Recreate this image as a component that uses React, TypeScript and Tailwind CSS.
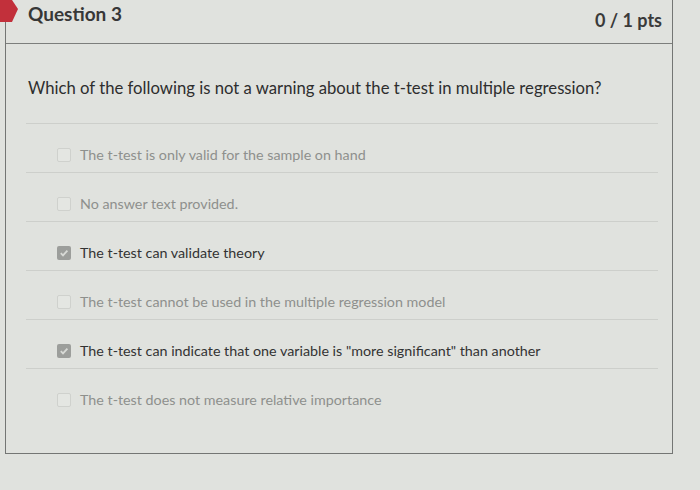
import React from "react";

const answers = [
  { text: "The t-test is only valid for the sample on hand", checked: false },
  { text: "No answer text provided.", checked: false },
  { text: "The t-test can validate theory", checked: true },
  { text: "The t-test cannot be used in the multiple regression model", checked: false },
  { text: 'The t-test can indicate that one variable is "more significant" than another', checked: true },
  { text: "The t-test does not measure relative importance", checked: false },
];

function Box({ checked }: { checked: boolean }) {
  if (checked) {
    return (
      <span className="flex h-[14px] w-[14px] shrink-0 items-center justify-center rounded-[2px] bg-[#9c9e9b]">
        <svg width="10" height="10" viewBox="0 0 10 10">
          <path d="M1.8 5.2 L4 7.4 L8.4 2.6" fill="none" stroke="#d8dad6" strokeWidth="1.8" />
        </svg>
      </span>
    );
  }
  return <span className="h-[14px] w-[14px] shrink-0 rounded-[2px] border border-[#cfd1cd] bg-[#e4e6e2]" />;
}

export default function App() {
  return (
    <div
      className="relative h-[490px] w-[700px] overflow-hidden bg-[#e0e2de]"
      style={{ fontFamily: "Lato, 'Noto Sans', sans-serif" }}
    >
      <svg className="absolute left-0 top-0" width="22" height="24" viewBox="0 0 22 24">
        <polygon points="0,0 12,0 18,9 12,22 0,22" fill="#c2303b" />
      </svg>
      <div className="ml-[5px] h-[454px] w-[668px] border-b border-l border-r border-[#747674]">
        <div className="flex h-[44px] items-start justify-between border-b border-[#7c7e7c] pl-[22px] pr-[10px]">
          <span className="pt-[1px] text-[19px] font-bold leading-[26px] text-[#373737]">Question 3</span>
          <span className="pt-[8px] text-[18px] font-bold leading-[24px] text-[#3a3a3a]">0 / 1 pts</span>
        </div>
        <div className="pl-[22px] pt-[34px] text-[16.7px] leading-[20px] text-[#2e2e2e]">
          Which of the following is not a warning about the t-test in multiple regression?
        </div>
        <div className="mt-[25px] pl-[20px] pr-[14px]">
          {answers.map((a, i) => (
            <div
              key={i}
              className="flex h-[49px] items-start gap-[9px] border-t border-[#cdcfcb] pl-[31px] pt-[24px]"
            >
              <Box checked={a.checked} />
              <span
                className={
                  "-mt-[1px] text-[14.3px] leading-[16px] " +
                  (a.checked ? "text-[#333333]" : "text-[#8e908d]")
                }
              >
                {a.text}
              </span>
            </div>
          ))}
        </div>
      </div>
    </div>
  );
}
